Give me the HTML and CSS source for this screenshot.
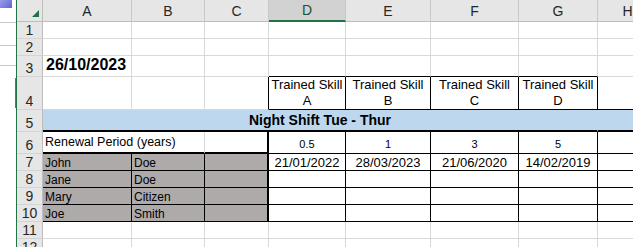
FILE: index.html
```html
<!DOCTYPE html>
<html lang="en">
<head>
  <meta charset="utf-8" />
  <title>Training Matrix</title>
  <link rel="stylesheet" href="styles.css">
</head>
<body>
  <div class="window">
    <div class="strip">
      <span class="strip-corner"></span>
      <span class="strip-line line-1"></span>
      <span class="strip-line line-2"></span>
      <span class="strip-line line-3"></span>
      <span class="strip-mark"></span>
    </div>

    <div class="sheet">
      <!-- column headers -->
      <div class="corner"><span class="corner-tri"></span></div>
      <div class="hd">A</div>
      <div class="hd">B</div>
      <div class="hd">C</div>
      <div class="hd sel">D</div>
      <div class="hd">E</div>
      <div class="hd">F</div>
      <div class="hd">G</div>
      <div class="hd">H</div>

      <!-- row 1 -->
      <div class="rh">1</div>
      <div class="cell"></div><div class="cell"></div><div class="cell"></div>
      <div class="cell"></div><div class="cell"></div><div class="cell"></div>
      <div class="cell"></div><div class="cell"></div>

      <!-- row 2 -->
      <div class="rh">2</div>
      <div class="cell"></div><div class="cell"></div><div class="cell"></div>
      <div class="cell"></div><div class="cell"></div><div class="cell"></div>
      <div class="cell"></div><div class="cell"></div>

      <!-- row 3 -->
      <div class="rh">3</div>
      <div class="cell date">26/10/2023</div>
      <div class="cell"></div>
      <div class="cell"></div>
      <div class="cell bb"></div>
      <div class="cell bb"></div>
      <div class="cell bb"></div>
      <div class="cell bb"></div>
      <div class="cell"></div>

      <!-- row 4 -->
      <div class="rh">4</div>
      <div class="cell"></div>
      <div class="cell"></div>
      <div class="cell br"></div>
      <div class="cell skill br bb">Trained Skill<br>A</div>
      <div class="cell skill br bb">Trained Skill<br>B</div>
      <div class="cell skill br bb">Trained Skill<br>C</div>
      <div class="cell skill br bb">Trained Skill<br>D</div>
      <div class="cell bb"></div>

      <!-- row 5 -->
      <div class="rh">5</div>
      <div class="cell band">Night Shift Tue - Thur</div>
      <div class="cell band-end"></div>

      <!-- row 6 -->
      <div class="rh">6</div>
      <div class="cell label">Renewal Period (years)</div>
      <div class="cell bb2 brt"></div>
      <div class="cell num br bb">0.5</div>
      <div class="cell num br bb">1</div>
      <div class="cell num br bb">3</div>
      <div class="cell num br bb">5</div>
      <div class="cell bb"></div>

      <!-- row 7 -->
      <div class="rh">7</div>
      <div class="cell name br bb">John</div>
      <div class="cell name br bb">Doe</div>
      <div class="cell name brt bb"></div>
      <div class="cell day br bb">21/01/2022</div>
      <div class="cell day br bb">28/03/2023</div>
      <div class="cell day br bb">21/06/2020</div>
      <div class="cell day br bb">14/02/2019</div>
      <div class="cell bb"></div>

      <!-- row 8 -->
      <div class="rh">8</div>
      <div class="cell name br bb">Jane</div>
      <div class="cell name br bb">Doe</div>
      <div class="cell name brt bb"></div>
      <div class="cell br bb"></div>
      <div class="cell br bb"></div>
      <div class="cell br bb"></div>
      <div class="cell br bb"></div>
      <div class="cell bb"></div>

      <!-- row 9 -->
      <div class="rh">9</div>
      <div class="cell name br bb">Mary</div>
      <div class="cell name br bb">Citizen</div>
      <div class="cell name brt bb"></div>
      <div class="cell br bb"></div>
      <div class="cell br bb"></div>
      <div class="cell br bb"></div>
      <div class="cell br bb"></div>
      <div class="cell bb"></div>

      <!-- row 10 -->
      <div class="rh">10</div>
      <div class="cell name br bb">Joe</div>
      <div class="cell name br bb">Smith</div>
      <div class="cell name brt bb"></div>
      <div class="cell br bb"></div>
      <div class="cell br bb"></div>
      <div class="cell br bb"></div>
      <div class="cell br bb"></div>
      <div class="cell bb"></div>

      <!-- row 11 -->
      <div class="rh">11</div>
      <div class="cell"></div><div class="cell"></div><div class="cell"></div>
      <div class="cell"></div><div class="cell"></div><div class="cell"></div>
      <div class="cell"></div><div class="cell"></div>

      <!-- row 12 -->
      <div class="rh">12</div>
      <div class="cell"></div><div class="cell"></div><div class="cell"></div>
      <div class="cell"></div><div class="cell"></div><div class="cell"></div>
      <div class="cell"></div><div class="cell"></div>
    </div>
  </div>
</body>
</html>
```

FILE: styles.css
```css
* {
  box-sizing: border-box;
}

body {
  margin: 0;
  overflow: hidden;
  background-color: #fff;
  font-family: 'Liberation Sans', Arial, sans-serif;
  color: #000;
}

.window {
  display: flex;
  height: 247px;
}

/* window behind the sheet, left edge */
.strip {
  position: relative;
  flex: none;
  width: 17px;
  border-right: 1px solid #217346;
  background-color: #fff;
}

.strip-corner {
  position: absolute;
  left: 0;
  top: 0;
  width: 12px;
  height: 8px;
  background: linear-gradient(135deg, #9a9de8, #5c62d6);
}

.strip-line {
  position: absolute;
  left: 0;
  width: 16px;
  height: 1px;
  background-color: #c8c8c8;
}

.line-1 { top: 22px; }
.line-2 { top: 45px; }
.line-3 { top: 65px; }

.strip-mark {
  position: absolute;
  right: 0;
  top: 78px;
  width: 1px;
  height: 30px;
  background-color: #2f7fb8;
}

/* the grid itself */
.sheet {
  display: grid;
  grid-template-columns: 26px 89px 73px 64px 77px 85px 88px 79px 60px;
  grid-template-rows: 22px 17px 17px 21px 33px 22px 22px 17px 17px 17px 17px 17px 17px;
  flex: none;
}

.corner,
.hd,
.rh {
  background-color: #e6e6e6;
  color: #262626;
  font-size: 14px;
}

.corner {
  position: relative;
  border-right: 1px solid #bdbdbd;
  border-bottom: 1px solid #bdbdbd;
}

.corner-tri {
  position: absolute;
  right: 3px;
  bottom: 4px;
  width: 0;
  height: 0;
  border-left: 7px solid transparent;
  border-bottom: 7px solid #217346;
}

.hd {
  display: flex;
  align-items: center;
  justify-content: center;
  border-right: 1px solid #c8c8c8;
  border-bottom: 1px solid #bdbdbd;
}

.hd.sel {
  background-color: #d2d2d2;
  border-bottom: 2px solid #217346;
  color: #1d4f33;
}

.rh {
  display: flex;
  align-items: flex-end;
  justify-content: center;
  line-height: 16px;
  border-right: 1px solid #bdbdbd;
  border-bottom: 1px solid #d4d4d4;
}

.cell {
  display: flex;
  align-items: flex-end;
  overflow: hidden;
  white-space: nowrap;
  font-size: 12px;
  line-height: 14px;
  border-right: 1px solid #d9d9d9;
  border-bottom: 1px solid #d9d9d9;
}

.bb {
  border-bottom-color: #000;
}

.br {
  border-right-color: #000;
}

.brt {
  border-right: 2px solid #000;
}

.bb2 {
  border-bottom: 2px solid #000;
}

.date {
  padding: 0 0 2px 3px;
  font-size: 16px;
  font-weight: bold;
  line-height: 18px;
}

.skill {
  justify-content: center;
  text-align: center;
  white-space: normal;
  font-size: 13px;
  line-height: 16px;
}

.band {
  grid-column: span 7;
  justify-content: center;
  padding-bottom: 2px;
  background-color: #bdd7ee;
  border-right-color: #bdd7ee;
  border-bottom: 2px solid #000;
  font-size: 14px;
  font-weight: bold;
  line-height: 16px;
}

.band-end {
  background-color: #bdd7ee;
  border-bottom: 2px solid #000;
}

.label {
  grid-column: span 2;
  padding: 0 0 3px 2px;
  font-size: 12.5px;
  border-bottom: 2px solid #000;
}

.num {
  justify-content: center;
  padding-bottom: 2px;
  font-size: 11px;
  line-height: 13px;
}

.name {
  padding-left: 2px;
  background-color: #aeaaaa;
}

.day {
  justify-content: center;
  font-size: 13px;
}
```
